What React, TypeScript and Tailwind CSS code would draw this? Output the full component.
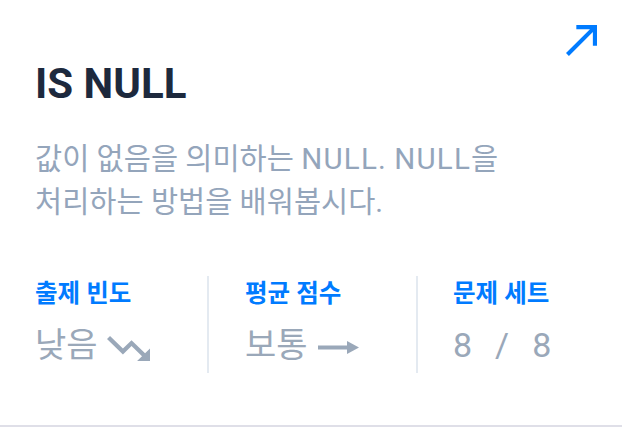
import React from "react";

type Stat = {
  label: string;
  value: React.ReactNode;
};

function ArrowNorthEast() {
  return (
    <svg width="31" height="31" viewBox="4 5 15 15" fill="#007bff">
      <path d="M9 5v2h6.59L4 18.59 5.41 20 17 8.41V15h2V5z" />
    </svg>
  );
}

function TrendingDown() {
  return (
    <svg width="43" height="25" viewBox="2 6 20 12" preserveAspectRatio="none" fill="#9aa8b9">
      <path d="M16 18l2.29-2.29-4.88-4.88-4 4L2 7.41 3.41 6l6 6 4-4 6.3 6.29L22 12v6z" />
    </svg>
  );
}

function TrendingFlat() {
  return (
    <svg width="41" height="13" viewBox="0 0 41 13" fill="#9aa8b9">
      <rect x="0" y="4.5" width="30" height="4" />
      <path d="M29 0L41 6.5 29 13z" />
    </svg>
  );
}

const stats: Stat[] = [
  {
    label: "출제 빈도",
    value: (
      <span className="flex items-center gap-[9px]">
        <span>낮음</span>
        <span className="mt-[6px]">
          <TrendingDown />
        </span>
      </span>
    ),
  },
  {
    label: "평균 점수",
    value: (
      <span className="flex items-center gap-[10px]">
        <span>보통</span>
        <span className="mt-[4px]">
          <TrendingFlat />
        </span>
      </span>
    ),
  },
  {
    label: "문제 세트",
    value: (
      <span className="flex items-center gap-[23px]">
        <span>8</span>
        <span>/</span>
        <span>8</span>
      </span>
    ),
  },
];

export default function App() {
  return (
    <div
      className="relative h-[427px] w-full border-b-2 border-[#dfdfe8] bg-white px-[35px] pt-[59px]"
      style={{ fontFamily: 'Roboto, "Noto Sans CJK KR", sans-serif' }}
    >
      <div className="absolute right-[25px] top-[25px]">
        <ArrowNorthEast />
      </div>

      <h2 className="text-[42px] font-bold leading-[50px] text-slate-800">IS NULL</h2>

      <p className="mt-[29px] max-w-[540px] break-keep text-[29.5px] leading-[43px] text-[#94a5bb]">
        값이 없음을 의미하는 <span className="tracking-[1.2px]">NULL.</span>{" "}
        <span className="tracking-[1.2px]">NULL</span>을 처리하는 방법을 배워봅시다.
      </p>

      <div className="mt-[52px] flex h-[97px]">
        {stats.map((stat, idx) => (
          <React.Fragment key={stat.label}>
            {idx > 0 && <div className="w-[2px] shrink-0 bg-[#e4eaf1]" />}
            <div
              className={
                idx === 0
                  ? "w-[172px] shrink-0"
                  : idx === 1
                  ? "w-[207px] shrink-0 pl-[36px]"
                  : "flex-1 pl-[35px]"
              }
            >
              <div className="text-[24.5px] font-bold leading-[35px] text-[#007bff]">
                {stat.label}
              </div>
              <div className="mt-[12px] text-[34px] leading-[44px] text-[#9aa8b9]">
                {stat.value}
              </div>
            </div>
          </React.Fragment>
        ))}
      </div>
    </div>
  );
}
